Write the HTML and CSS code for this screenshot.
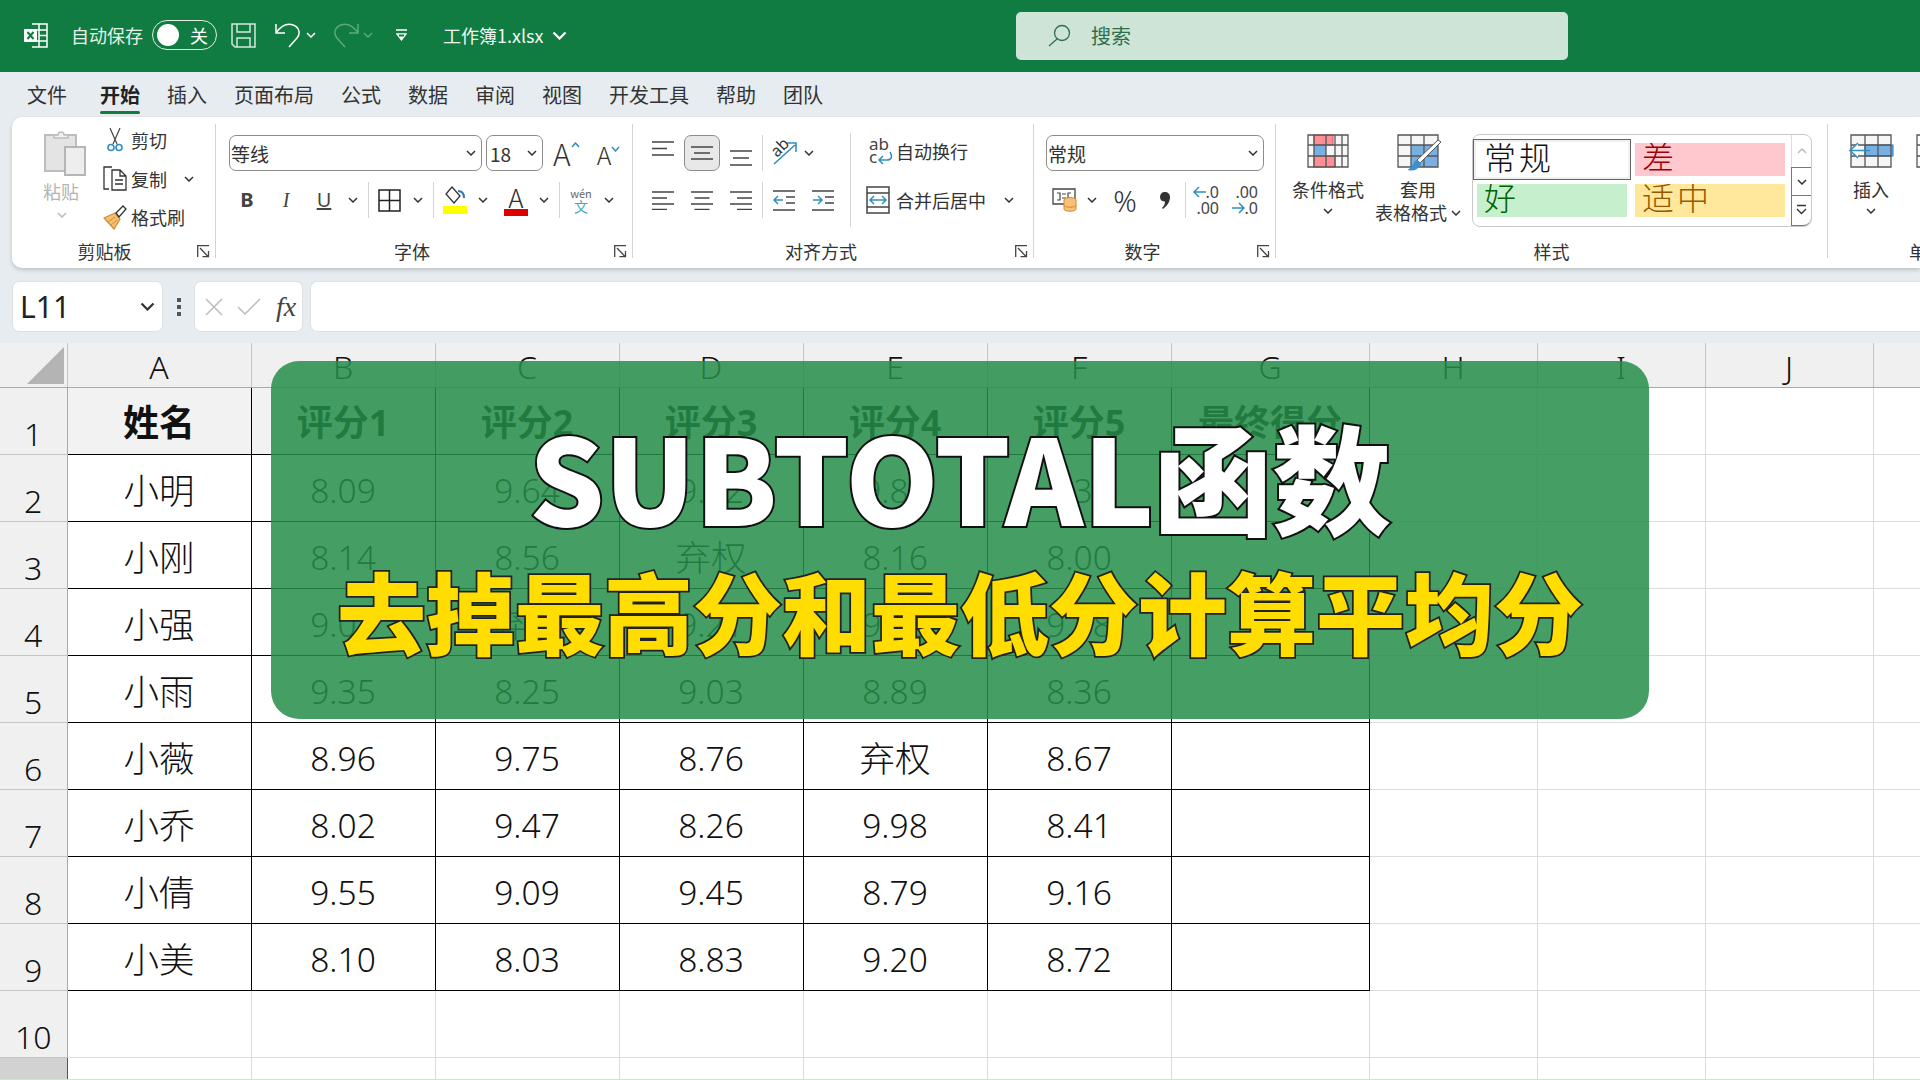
FILE: index.html
```html
<!DOCTYPE html>
<html lang="zh-CN">
<head>
<meta charset="utf-8">
<title>工作簿1.xlsx - Excel</title>
<link rel="stylesheet" href="styles.css">
</head>
<body>
<svg class="defs" width="0" height="0" aria-hidden="true">
  <symbol id="chev" viewBox="0 0 10 6"><path d="M1 1l4 4 4-4" fill="none" stroke="currentColor" stroke-width="1.5"/></symbol>
  <symbol id="launch" viewBox="0 0 13 13"><path d="M.7 12V.7H12M3 3l8 8.5M11.5 6v5.7H5.5" fill="none" stroke="#444" stroke-width="1.3"/></symbol>
  <symbol id="lines" viewBox="0 0 22 19"><path d="M0 1h22M0 7h15M0 13h22M0 18.5h15" fill="none" stroke="#444" stroke-width="1.3"/></symbol>
</svg>

<header class="titlebar">
  <div class="qat">
    <svg class="q-logo" width="24" height="25" viewBox="0 0 24 25"><path d="M8 1h15v23H8M15 1v23M15 7h8M15 12.500h8M15 18h8M8 7h7M8 18h7" fill="none" stroke="#fff" stroke-width="1.500"/><rect x="0" y="6" width="13" height="13" rx="1" fill="#fff"/><path d="M3.500 9l6 7M9.500 9l-6 7" stroke="#107c41" stroke-width="2"/></svg>
    <span class="q-auto">自动保存</span>
    <span class="toggle"><i class="knob"></i><span class="toggle-text">关</span></span>
    <svg class="q-save" width="25" height="25" viewBox="0 0 25 25"><path d="M1 1h23v23H4l-3-3zM6 1v8h13V1M6 24v-9h13v9" fill="none" stroke="#d5e8dc" stroke-width="1.500"/></svg>
    <svg class="q-undo" width="26" height="26" viewBox="0 0 26 26"><path d="M1 2v9h9M1 11C6 4 12 1 18 3c6 2 8 8 4 13l-8 9" fill="none" stroke="#fff" stroke-width="1.500"/></svg>
    <svg class="q-chev" width="10" height="6"><use href="#chev"/></svg>
    <svg class="q-redo" width="26" height="26" viewBox="0 0 26 26"><path d="M25 2v9h-9M25 11C20 4 14 1 8 3c-6 2-8 8-4 13l8 9" fill="none" stroke="#5fa77f" stroke-width="1.500"/></svg>
    <svg class="q-chev q-dim" width="10" height="6"><use href="#chev"/></svg>
    <svg class="q-more" width="11" height="13" viewBox="0 0 11 13"><path d="M0 1h11M1 5l4.500 6L10 5z" fill="#fff" stroke="#fff" stroke-width="1.300"/><path d="M3 6.500h5" stroke="#107c41" stroke-width="2"/></svg>
    <span class="q-name">工作簿1.xlsx</span>
    <svg class="q-namechev" width="15" height="9"><use href="#chev"/></svg>
  </div>
  <div class="search">
    <svg width="23" height="23" viewBox="0 0 23 23"><circle cx="14" cy="9" r="7.500" fill="none" stroke="#2f6f4d" stroke-width="1.300"/><path d="M9 15L1 22" stroke="#2f6f4d" stroke-width="1.300"/></svg>
    <span>搜索</span>
  </div>
</header>

<nav class="tabs">
  <span class="tab-file">文件</span><span class="tab-on">开始</span><span>插入</span><span>页面布局</span><span>公式</span><span>数据</span><span>审阅</span><span>视图</span><span>开发工具</span><span>帮助</span><span>团队</span>
</nav>

<section class="ribbon">
  <div class="group g-clip">
    <div class="clip-body">
      <div class="paste">
        <svg width="42" height="46" viewBox="0 0 42 46"><rect x="1" y="5" width="31" height="36" fill="#e4e4e4" stroke="#bdbdbd" stroke-width="2"/><path d="M10 8V5h4c0-4 6-4 6 0h4v3z" fill="#f0f0f0" stroke="#bdbdbd" stroke-width="1.500"/><rect x="21" y="17" width="20" height="28" fill="#eee" stroke="#b5b5b5" stroke-width="2"/></svg>
        <span class="paste-t">粘贴</span>
        <svg class="paste-c" width="10" height="6"><use href="#chev"/></svg>
      </div>
      <div class="clip-list">
        <div class="clip-row"><span class="clip-ic"><svg width="16" height="24" viewBox="0 0 16 24"><path d="M3 0l7 16M13 0L6 16" fill="none" stroke="#444" stroke-width="1.200"/><circle cx="4" cy="19.500" r="3" fill="none" stroke="#2f8fbf" stroke-width="1.600"/><circle cx="12" cy="19.500" r="3" fill="none" stroke="#2f8fbf" stroke-width="1.600"/></svg></span><span>剪切</span></div>
        <div class="clip-row"><span class="clip-ic"><svg width="24" height="25" viewBox="0 0 24 25"><path d="M9 1H1v22h5M9 4h8l6 6v14H9zM17 4v6h6M12 14h8M12 18h8" fill="none" stroke="#333" stroke-width="1.300"/></svg></span><span>复制</span><svg class="clip-c" width="10" height="6"><use href="#chev"/></svg></div>
        <div class="clip-row"><span class="clip-ic"><svg width="24" height="25" viewBox="0 0 24 25"><path d="M1 13l11-5 5 6-6 10z" fill="#f3c078" stroke="#d98a2b" stroke-width="1.300"/><path d="M5 17l7-5M8 20l6-5" stroke="#d98a2b" stroke-width="1"/><path d="M13 8l7-7 3 3-7 8z" fill="none" stroke="#333" stroke-width="1.300"/></svg></span><span>格式刷</span></div>
      </div>
    </div>
    <div class="g-label clip-label">剪贴板</div>
    <svg class="launcher" width="13" height="13"><use href="#launch"/></svg>
  </div>

  <div class="group g-font">
    <div class="row-a">
      <div class="select s-font"><span>等线</span><svg width="10" height="6"><use href="#chev"/></svg></div>
      <div class="select s-size"><span>18</span><svg width="10" height="6"><use href="#chev"/></svg></div>
      <span class="grow-a">A<svg width="9" height="6" viewBox="0 0 9 6"><path d="M1 5l3.500-4L8 5" fill="none" stroke="#2f8fbf" stroke-width="1.500"/></svg></span>
      <span class="shrink-a">A<svg width="9" height="6" viewBox="0 0 9 6"><path d="M1 1l3.500 4L8 1" fill="none" stroke="#2f8fbf" stroke-width="1.500"/></svg></span>
    </div>
    <div class="row-b font-tracks">
      <b class="f-b">B</b><i class="f-i">I</i><u class="f-u">U</u><svg width="10" height="6"><use href="#chev"/></svg><span class="sep"></span>
      <svg width="23" height="23" viewBox="0 0 23 23"><path d="M1 1h21v21H1zM11.500 1v21M1 11.500h21" fill="none" stroke="#222" stroke-width="1.500"/></svg>
      <svg width="10" height="6"><use href="#chev"/></svg><span class="sep"></span>
      <svg width="24" height="30" viewBox="0 0 24 30"><path d="M9 2l8 9-6 7-8-9z" fill="#fff" stroke="#333" stroke-width="1.300"/><path d="M15 6c4 0 6 2 6 7" fill="none" stroke="#2b7cb8" stroke-width="2"/><rect y="21" width="24" height="8" fill="#ffff00"/></svg>
      <svg width="10" height="6"><use href="#chev"/></svg>
      <span class="f-color">A<i class="f-bar"></i></span>
      <svg width="10" height="6"><use href="#chev"/></svg><span class="sep"></span>
      <span class="f-wen">wén<em>文</em></span>
      <svg width="10" height="6"><use href="#chev"/></svg>
    </div>
    <div class="g-label">字体</div>
    <svg class="launcher" width="13" height="13"><use href="#launch"/></svg>
  </div>

  <div class="group g-align">
    <div class="align-body">
      <div class="align-left">
        <div class="row-a align-tracks">
          <svg width="22" height="26" viewBox="0 0 22 26"><path d="M0 5h22M0 11.500h15M0 18h22" transform="translate(0 -3)" fill="none" stroke="#444" stroke-width="1.300"/></svg>
          <span class="al-on"><svg width="22" height="14" viewBox="0 0 22 14"><path d="M0 1h22M3 7h16M0 13h22" fill="none" stroke="#444" stroke-width="1.300"/></svg></span>
          <svg width="22" height="26" viewBox="0 0 22 26"><path d="M0 9h22M3 16h16M0 23h22" transform="translate(0 2)" fill="none" stroke="#444" stroke-width="1.300"/></svg>
          <span class="sep"></span>
          <span class="orient"><span class="orient-t">ab</span><svg width="26" height="26" viewBox="0 0 26 26"><path d="M3 25L24 6M16 4h9v9" fill="none" stroke="#2f8fbf" stroke-width="1.600"/></svg></span>
          <svg width="10" height="6"><use href="#chev"/></svg>
        </div>
        <div class="row-b align-tracks2">
          <svg width="22" height="19"><use href="#lines"/></svg>
          <svg width="22" height="19" viewBox="0 0 22 19"><path d="M0 1h22M3.500 7h15M0 13h22M3.500 18.500h15" fill="none" stroke="#444" stroke-width="1.300"/></svg>
          <svg width="22" height="19" viewBox="0 0 22 19"><path d="M0 1h22M7 7h15M0 13h22M7 18.500h15" fill="none" stroke="#444" stroke-width="1.300"/></svg>
          <span class="sep"></span>
          <svg width="22" height="21" viewBox="0 0 22 21"><path d="M0 1h22M13 7h9M13 13h9M0 20h22" fill="none" stroke="#444" stroke-width="1.300"/><path d="M10 10H1M5 6l-4 4 4 4" fill="none" stroke="#2f8fbf" stroke-width="1.500"/></svg>
          <svg width="22" height="21" viewBox="0 0 22 21"><path d="M0 1h22M13 7h9M13 13h9M0 20h22" fill="none" stroke="#444" stroke-width="1.300"/><path d="M1 10h9M6 6l4 4-4 4" fill="none" stroke="#2f8fbf" stroke-width="1.500"/></svg>
        </div>
      </div>
      <span class="sep sep-tall"></span>
      <div class="align-right">
        <div class="wrap-row"><span class="wrap-ic"><span class="wrap-t">ab<br>c</span><svg width="16" height="14" viewBox="0 0 16 14"><path d="M13 1c3 5 1 8-3 8H2M6 5L2 9l4 4" fill="none" stroke="#2f8fbf" stroke-width="1.500"/></svg></span><span>自动换行</span></div>
        <div class="wrap-row"><svg class="merge-ic" width="24" height="28" viewBox="0 0 24 28"><path d="M1 1h22v26H1zM1 7h22M1 21h22" fill="none" stroke="#444" stroke-width="1.500"/><path d="M4 14h16M8 10l-4 4 4 4M16 10l4 4-4 4" fill="none" stroke="#2f8fbf" stroke-width="1.500"/></svg><span>合并后居中</span><svg class="merge-c" width="10" height="6"><use href="#chev"/></svg></div>
      </div>
    </div>
    <div class="g-label">对齐方式</div>
    <svg class="launcher" width="13" height="13"><use href="#launch"/></svg>
  </div>

  <div class="group g-num">
    <div class="row-a"><div class="select s-num"><span>常规</span><svg width="10" height="6"><use href="#chev"/></svg></div></div>
    <div class="row-b num-tracks">
      <svg width="25" height="24" viewBox="0 0 25 24"><path d="M1 1h22v15H1z" fill="none" stroke="#444" stroke-width="1.300"/><path d="M5 5h3v7H5M19 5h-3v7h3M10 6h4M10 10h4" fill="none" stroke="#444" stroke-width="1.200"/><ellipse cx="18" cy="12" rx="6" ry="2.500" fill="#f6c27a" stroke="#d98a2b"/><path d="M12 12v9c0 3 12 3 12 0v-9" fill="#f6c27a" stroke="#d98a2b"/><path d="M12 17c0 3 12 3 12 0" fill="none" stroke="#d98a2b"/></svg>
      <svg width="10" height="6"><use href="#chev"/></svg>
      <span class="n-pct">%</span>
      <svg width="10" height="17" viewBox="0 0 10 17"><path d="M4.500 0C8 0 10 2 10 5c0 5-3 9-7 12l-1-1c2-2 3-4 3-6.500C2 9.500 0 8 0 5s2-5 4.500-5z" fill="#333"/></svg>
      <span class="sep"></span>
      <span class="dec"><span class="dec-top"><svg width="13" height="12" viewBox="0 0 13 12"><path d="M13 6H1M6 1L1 6l5 5" fill="none" stroke="#2f8fbf" stroke-width="1.500"/></svg>.0</span><span class="dec-bot">.00</span></span>
      <span class="dec"><span class="dec-bot">.00</span><span class="dec-top"><svg width="13" height="12" viewBox="0 0 13 12"><path d="M0 6h12M7 1l5 5-5 5" fill="none" stroke="#2f8fbf" stroke-width="1.500"/></svg>.0</span></span>
    </div>
    <div class="g-label">数字</div>
    <svg class="launcher" width="13" height="13"><use href="#launch"/></svg>
  </div>

  <div class="group g-style">
    <div class="style-body">
      <div class="big big-cond">
        <svg width="42" height="34" viewBox="0 0 42 34"><rect x="1" y="1" width="40" height="32" fill="#f6f6f6"/><rect x="7" y="1" width="19" height="10" fill="#ff8f96" stroke="#d9534f"/><rect x="7" y="11" width="12" height="10" fill="#79b0e4"/><rect x="7" y="22" width="21" height="11" fill="#ff8f96" stroke="#d9534f"/><path d="M1 1h40v32H1zM7 1v32M19 1v32M28 1v32M35 1v32M1 11h40M1 22h40" fill="none" stroke="#555" stroke-width="1.300"/></svg>
        <span class="big-t">条件格式</span>
        <svg class="big-c" width="10" height="6"><use href="#chev"/></svg>
      </div>
      <div class="big big-table">
        <svg width="46" height="38" viewBox="0 0 46 38"><rect x="1" y="1" width="40" height="32" fill="#f6f6f6"/><rect x="14" y="11" width="27" height="22" fill="#79b0e4"/><path d="M1 1h40v32H1zM14 1v32M27 1v32M1 11h40M1 22h40" fill="none" stroke="#555" stroke-width="1.300"/><path d="M44 8L23 29l-3-3L41 6z" fill="#fff" stroke="#555"/><path d="M20 26c-3 0-3 4-5 6-1 2-4 3-4 4 5 2 12-1 13-7z" fill="#3d8fd1"/></svg>
        <span class="big-t big-t2">套用</span>
        <span class="big-t">表格格式<svg class="big-ci" width="10" height="6"><use href="#chev"/></svg></span>
      </div>
      <div class="gallery">
        <div class="g-cells">
          <span class="sc sc-normal">常规</span><span class="sc sc-bad">差</span><span class="sc sc-good">好</span><span class="sc sc-mid">适中</span>
        </div>
        <div class="g-scroll">
          <span class="gs gs-up"><svg width="10" height="6" viewBox="0 0 10 6"><path d="M1 5l4-4 4 4" fill="none" stroke="#bbb" stroke-width="1.500"/></svg></span>
          <span class="gs gs-dn"><svg width="10" height="6"><use href="#chev"/></svg></span>
          <span class="gs gs-more"><svg width="11" height="13" viewBox="0 0 11 13"><path d="M1 1.500h9M1 5l4.500 4.500L10 5" fill="none" stroke="#333" stroke-width="1.400"/></svg></span>
        </div>
      </div>
    </div>
    <div class="g-label g-label-plain">样式</div>
  </div>

  <div class="group g-cells-group">
    <div class="style-body">
      <div class="big big-ins">
        <svg width="46" height="34" viewBox="0 0 46 34"><rect x="3" y="1" width="40" height="32" fill="#f6f6f6"/><rect x="17" y="11" width="28" height="11" fill="#79b0e4" stroke="#2b7cb8"/><path d="M3 1h40v32H3zM17 1v32M30 1v32M3 11h40M3 22h40" fill="none" stroke="#555" stroke-width="1.300"/><path d="M22 16.500H3M10 9l-8 7.500 8 7.500" fill="#fff" stroke="#2f8fbf" stroke-width="1.600"/></svg>
        <span class="big-t">插入</span>
        <svg class="big-c" width="10" height="6"><use href="#chev"/></svg>
      </div>
      <div class="big big-del">
        <svg width="46" height="34" viewBox="0 0 46 34"><path d="M1 1h40v32H1zM14 1v32M1 11h40M1 22h40" fill="none" stroke="#555" stroke-width="1.300"/></svg>
      </div>
    </div>
    <div class="g-label g-label-cut">单</div>
  </div>
</section>

<section class="formula">
  <div class="namebox"><span>L11</span><svg width="15" height="9"><use href="#chev"/></svg></div>
  <span class="dots"><i></i><i></i><i></i></span>
  <div class="fxbox">
    <svg width="18" height="18" viewBox="0 0 18 18"><path d="M1 1l16 16M17 1L1 17" stroke="#bcbcbc" stroke-width="1.500"/></svg>
    <svg width="24" height="17" viewBox="0 0 24 17"><path d="M1 9l7 7L23 1" fill="none" stroke="#bcbcbc" stroke-width="1.500"/></svg>
    <span class="fx">fx</span>
  </div>
  <div class="fxinput"></div>
</section>

<main class="sheet">
  <table class="grid">
    <colgroup><col class="c-h"><col class="c-a"><col class="c-b"><col class="c-c"><col class="c-d"><col class="c-e"><col class="c-f"><col class="c-g"><col class="c-x"><col class="c-y"><col class="c-z"><col class="c-rest"></colgroup>
    <thead>
      <tr class="r-head"><th class="corner"><i class="tri"></i></th><th>A</th><th>B</th><th>C</th><th>D</th><th>E</th><th>F</th><th>G</th><th>H</th><th>I</th><th>J</th><th></th></tr>
    </thead>
    <tbody>
      <tr><th class="rn">1</th><td class="d hd">姓名</td><td class="d hd">评分1</td><td class="d hd">评分2</td><td class="d hd">评分3</td><td class="d hd">评分4</td><td class="d hd">评分5</td><td class="d hd">最终得分</td><td></td><td></td><td></td><td></td></tr>
      <tr><th class="rn">2</th><td class="d zh">小明</td><td class="d">8.09</td><td class="d">9.64</td><td class="d">9.72</td><td class="d">9.81</td><td class="d">8.33</td><td class="d"></td><td></td><td></td><td></td><td></td></tr>
      <tr><th class="rn">3</th><td class="d zh">小刚</td><td class="d">8.14</td><td class="d">8.56</td><td class="d zh">弃权</td><td class="d">8.16</td><td class="d">8.00</td><td class="d"></td><td></td><td></td><td></td><td></td></tr>
      <tr><th class="rn">4</th><td class="d zh">小强</td><td class="d">9.07</td><td class="d zh">弃权</td><td class="d">9.21</td><td class="d">9.32</td><td class="d">9.58</td><td class="d"></td><td></td><td></td><td></td><td></td></tr>
      <tr><th class="rn">5</th><td class="d zh">小雨</td><td class="d">9.35</td><td class="d">8.25</td><td class="d">9.03</td><td class="d">8.89</td><td class="d">8.36</td><td class="d"></td><td></td><td></td><td></td><td></td></tr>
      <tr><th class="rn">6</th><td class="d zh">小薇</td><td class="d">8.96</td><td class="d">9.75</td><td class="d">8.76</td><td class="d zh">弃权</td><td class="d">8.67</td><td class="d"></td><td></td><td></td><td></td><td></td></tr>
      <tr><th class="rn">7</th><td class="d zh">小乔</td><td class="d">8.02</td><td class="d">9.47</td><td class="d">8.26</td><td class="d">9.98</td><td class="d">8.41</td><td class="d"></td><td></td><td></td><td></td><td></td></tr>
      <tr><th class="rn">8</th><td class="d zh">小倩</td><td class="d">9.55</td><td class="d">9.09</td><td class="d">9.45</td><td class="d">8.79</td><td class="d">9.16</td><td class="d"></td><td></td><td></td><td></td><td></td></tr>
      <tr><th class="rn">9</th><td class="d zh">小美</td><td class="d">8.10</td><td class="d">8.03</td><td class="d">8.83</td><td class="d">9.20</td><td class="d">8.72</td><td class="d"></td><td></td><td></td><td></td><td></td></tr>
      <tr><th class="rn">10</th><td></td><td></td><td></td><td></td><td></td><td></td><td></td><td></td><td></td><td></td><td></td></tr>
      <tr><th class="rn rn-sel"></th><td></td><td></td><td></td><td></td><td></td><td></td><td></td><td></td><td></td><td></td><td></td></tr>
    </tbody>
  </table>
  <div class="banner">
    <div class="b-title">SUBTOTAL函数</div>
    <div class="b-sub">去掉最高分和最低分计算平均分</div>
  </div>
</main>
</body>
</html>
```

FILE: styles.css
```css
* { box-sizing: border-box; }
html, body { margin: 0; padding: 0; }
body {
  width: 1920px; height: 1080px; overflow: hidden;
  background: #e6ecef; color: #333;
  font-family: "Noto Sans CJK SC", "Noto Sans", sans-serif;
  font-size: 18px;
}
svg { display: block; flex: none; }
.defs { position: absolute; }

/* title bar */
.titlebar { height: 72px; background: #107c41; display: flex; align-items: center; color: #fff; padding-bottom: 2px; }
.qat { width: 1016px; display: flex; align-items: center; padding-left: 24px; }
.q-auto { margin-left: 23px; width: 72px; color: #e4f1e9; line-height: 1; }
.toggle { margin-left: 9px; width: 65px; height: 30px; border: 1.5px solid #e0efe6; border-radius: 15px; display: flex; align-items: center; padding-left: 4px; }
.knob { width: 22px; height: 22px; background: #fff; border-radius: 50%; }
.toggle-text { margin-left: 11px; line-height: 1; }
.q-save { margin-left: 14px; }
.q-undo { margin-left: 19px; }
.q-chev { margin-left: 5px; color: #fff; }
.q-dim { color: #5fa77f; margin-left: 4px; }
.q-redo { margin-left: 17px; }
.q-more { margin-left: 23px; }
.q-name { margin-left: 36px; width: 104px; white-space: nowrap; line-height: 1; color: #f2f8f4; }
.q-namechev { margin-left: 5px; color: #fff; }
.search { width: 552px; height: 48px; margin-top: 2px; background: #cde4d7; border-radius: 5px; display: flex; align-items: center; padding-left: 32px; padding-bottom: 2px; color: #2f6f4d; font-size: 20px; }
.search span { margin-left: 20px; }

/* tabs */
.tabs { height: 45px; display: flex; gap: 27px; padding-left: 27px; align-items: center; font-size: 20px; color: #333; }
.tabs span { position: relative; line-height: 28px; }
.tabs .tab-file { margin-right: 6px; }
.tab-on { font-weight: 700; color: #222; }
.tab-on::after { content: ""; position: absolute; left: 0; right: 0; bottom: -5px; height: 3px; background: #107c41; border-radius: 2px; }

/* ribbon */
.ribbon { margin-left: 12px; height: 151px; background: #fff; border-radius: 10px 0 0 10px; box-shadow: 0 2px 4px rgba(0,0,0,.18); display: flex; padding-top: 7px; overflow: hidden; }
.group { position: relative; flex: none; height: 134px; border-right: 1px solid #d4d4d4; display: flex; flex-direction: column; }
.g-label { margin-top: auto; height: 14px; line-height: 14px; text-align: center; padding-right: 24px; color: #333; white-space: nowrap; }
.g-font .g-label, .g-align .g-label { margin-left: -13px; }
.g-num .g-label { margin-left: -12px; }
.g-style .g-label { margin-left: -14px; }
.g-label-plain { padding-right: 0; }
.launcher { position: absolute; right: 5px; bottom: 0; }
.sep { display: block; width: 1px; height: 36px; background: #d4d4d4; }
.row-a { height: 36px; margin-top: 11px; display: flex; align-items: center; }
.row-b { height: 36px; margin-top: 11px; display: grid; align-items: center; justify-items: center; }

/* clipboard */
.g-clip { width: 204px; }
.clip-body { display: flex; padding-left: 31px; height: 112px; }
.paste { width: 58px; padding-top: 6px; display: flex; flex-direction: column; align-items: flex-start; color: #b4b4b4; }
.paste svg:first-child { margin-left: 1px; }
.paste-t { line-height: 20px; margin-top: 5px; }
.paste-c { margin: 11px 0 0 14px; color: #bbb; }
.clip-list { display: flex; flex-direction: column; margin-top: -3px; }
.clip-row { height: 38.5px; flex: none; display: flex; align-items: center; line-height: 1; }
.clip-ic { width: 30px; display: flex; justify-content: center; padding-right: 3px; }
.clip-c { margin-left: 17px; color: #333; }
.clip-label { padding-right: 18px; }

/* selects */
.select { height: 36px; border: 1px solid #8c8c8c; border-radius: 7px; display: flex; align-items: center; justify-content: space-between; padding: 0 5px 0 1px; font-size: 19px; color: #333; }
.g-font { width: 417px; padding-left: 13px; }
.s-font { width: 253px; }
.s-size { width: 57px; margin-left: 4px; padding-left: 3px; }
.grow-a, .shrink-a { display: flex; align-items: flex-start; font-weight: 300; line-height: 1; color: #333; }
.grow-a { margin-left: 10px; font-size: 30px; }
.shrink-a { margin-left: 17px; font-size: 25px; padding-top: 3px; }
.grow-a svg, .shrink-a svg { margin-top: 4px; }
.font-tracks { grid-template-columns: 36px 42px 34px 24px 6px 36px 22px 8px 36px 20px 46px 10px 20px 24px 32px; }
.font-tracks svg { color: #333; }
.f-b { font-size: 20px; line-height: 1; font-family: "Noto Sans", sans-serif; color: #444; }
.f-i { font-size: 20px; line-height: 1; font-family: "Liberation Serif", serif; color: #444; }
.f-u { font-size: 20px; line-height: 1; color: #444; font-family: "Noto Sans", sans-serif; }
.f-color { display: flex; flex-direction: column; align-items: center; width: 24px; font-size: 26px; font-weight: 300; line-height: 24px; color: #333; }
.f-bar { width: 24px; height: 7px; background: #d00; }
.f-wen { display: flex; flex-direction: column; align-items: center; font-size: 11px; line-height: 12px; color: #666; white-space: nowrap; }
.f-wen em { font-style: normal; color: #4a9fc4; font-size: 14px; line-height: 15px; }

/* alignment */
.g-align { width: 401px; padding-left: 13px; }
.align-body { display: flex; height: 103px; }
.align-left { width: 204px; }
.align-tracks { display: grid; grid-template-columns: 34px 44px 34px 8px 36px 14px; align-items: center; justify-items: center; color: #333; }
.align-tracks2 { grid-template-columns: 34px 44px 34px 8px 36px 42px; }
.al-on { width: 36px; height: 36px; background: #e8e8e8; border: 1px solid #8c8c8c; border-radius: 7px; display: flex; align-items: center; justify-content: center; }
.orient { position: relative; width: 26px; height: 28px; display: block; }
.orient-t { position: absolute; left: -1px; top: 0; font-size: 16px; line-height: 1; color: #333; transform: rotate(-45deg); font-family: "Noto Sans", sans-serif; }
.sep-tall { height: 94px; margin-top: 9px; }
.align-right { padding-left: 15px; padding-top: 9px; display: flex; flex-direction: column; gap: 13px; }
.wrap-row { height: 36px; display: flex; align-items: center; line-height: 1; color: #333; }
.wrap-ic { width: 30px; position: relative; height: 30px; }
.wrap-t { position: absolute; left: 3px; top: 1px; font-size: 17px; line-height: 13px; font-family: "Noto Sans", sans-serif; color: #444; }
.wrap-ic svg { position: absolute; left: 11px; top: 15px; }
.merge-ic { margin-right: 6px; }
.merge-c { margin-left: 18px; color: #333; }

/* number */
.g-num { width: 242px; padding-left: 12px; }
.s-num { width: 218px; }
.num-tracks { grid-template-columns: 36px 20px 46px 34px 6px 36px 42px; color: #333; }
.n-pct { font-size: 29px; font-weight: 300; line-height: 1; font-family: "Noto Sans", sans-serif; }
.dec { display: flex; flex-direction: column; align-items: flex-end; font-size: 16px; line-height: 16px; width: 26px; font-family: "Noto Sans", sans-serif; color: #444; }
.dec-top { display: flex; align-items: center; white-space: nowrap; }
.dec-bot { white-space: nowrap; }

/* styles */
.g-style { width: 552px; padding-left: 14px; }
.style-body { display: flex; height: 103px; }
.big { display: flex; flex-direction: column; align-items: center; padding-top: 10px; color: #333; }
.big-t { line-height: 23px; margin-top: 10px; display: flex; align-items: center; white-space: nowrap; }
.big-t2 { margin-top: 6px; }
.big-t2 + .big-t { margin-top: 0; }
.big-c { margin-top: 7px; color: #333; }
.big-ci { margin-left: 5px; color: #333; }
.big-cond { width: 76px; }
.big-table { width: 100px; padding: 10px 0 0 4px; }
.big-table svg:first-child { margin-left: 4px; }
.gallery { margin-left: 6px; margin-top: 10px; width: 340px; height: 93px; border: 1px solid #c9c9c9; border-radius: 8px; display: flex; background: #fff; }
.g-cells { width: 316px; padding-top: 4px; display: grid; grid-template-columns: 158px 158px; grid-template-rows: 41px 41px; font-size: 32px; }
.sc { overflow: hidden; line-height: 25px; height: 33px; margin: 4px; padding-left: 7px; letter-spacing: 3px; font-weight: 300; }
.sc-normal { margin: 0; height: 41px; border: 1px solid #666; outline: 2px solid #f0f0f0; outline-offset: -3px; padding-left: 10px; line-height: 33px; color: #111; }
.sc-bad { background: #ffc7ce; color: #9c0006; }
.sc-good { background: #c6efce; color: #006100; }
.sc-mid { background: #ffe79c; color: #9c5700; }
.g-scroll { margin-left: 2px; flex: 1; display: flex; flex-direction: column; color: #333; }
.gs { display: flex; align-items: center; justify-content: center; border-left: 1px solid #777; }
.gs-up { height: 32px; border-left-color: #ddd; }
.gs-dn { height: 29px; border-top: 1px solid #777; border-bottom: 1px solid #777; }
.gs-more { flex: 1; border-bottom: 1px solid #777; border-bottom-right-radius: 8px; }

/* cells */
.g-cells-group { width: 200px; border-right: 0; padding-left: 20px; }
.big-ins { width: 46px; }
.big-del { width: 46px; margin-left: 22px; }
.g-label-cut { padding-right: 0; text-align: left; padding-left: 61px; }

/* formula bar */
.formula { height: 51px; margin-top: 13px; display: flex; padding-left: 12px; }
.namebox { width: 151px; background: #fff; border: 1px solid #dde1e4; border-radius: 7px; display: flex; align-items: center; justify-content: space-between; padding: 0 7px 0 7px; font-size: 30px; color: #222; font-family: "Noto Sans", sans-serif; }
.namebox svg { color: #333; }
.dots { width: 31px; display: flex; flex-direction: column; align-items: center; justify-content: center; gap: 3px; }
.dots i { width: 4px; height: 4px; background: #555; }
.fxbox { width: 109px; background: #fff; border: 1px solid #dde1e4; border-radius: 7px; display: flex; align-items: center; padding-left: 10px; gap: 14px; }
.fx { font-family: "Liberation Serif", serif; font-style: italic; font-size: 28px; line-height: 1; color: #444; margin-left: 1px; }
.fxinput { flex: 1; margin-left: 7px; background: #fff; border: 1px solid #dde1e4; border-right: 0; border-radius: 7px 0 0 7px; }

/* sheet */
.sheet { position: relative; margin-top: 11px; height: 737px; overflow: hidden; background: #fff; border-bottom: 1px solid #c6e9d1; }
.grid { border-collapse: collapse; table-layout: fixed; width: 1920px; font-family: "Noto Sans", "Noto Sans CJK SC", sans-serif; font-weight: 300; color: #111; }
.c-h { width: 67px; } .c-a { width: 184px; } .c-b { width: 184px; } .c-c { width: 184px; } .c-d { width: 184px; } .c-e { width: 184px; } .c-f { width: 184px; } .c-g { width: 198px; } .c-x { width: 168px; } .c-y { width: 168px; } .c-z { width: 168px; } .c-rest { width: 47px; }
.grid tr { height: 67px; }
.grid tr.r-head { height: 44px; }
.grid th, .grid td { padding: 0; text-align: center; }
.r-head th { background: #f0f0f0; font-weight: 300; font-size: 32px; line-height: 1; padding-top: 5px; border-right: 1px solid #c4c4c4; border-bottom: 1px solid #a8a8a8; }
.corner { position: relative; }
.tri { position: absolute; right: 3px; bottom: 3px; border-style: solid; border-width: 0 0 37px 37px; border-color: transparent transparent #b4b4b4 transparent; }
.rn { background: #f0f0f0; font-weight: 300; font-size: 32px; line-height: 1; vertical-align: bottom; padding-bottom: 4px !important; border-right: 1px solid #a8a8a8; border-bottom: 1px solid #c4c4c4; }
.rn-sel { background: #d2d2d2; border-right: 1px solid #107c41; }
.grid td { border: 1px solid #dcdcdc; font-size: 33.5px; line-height: 1; }
.grid td.d { border: 1px solid #000; padding-top: 7px; }
.grid td.zh { font-size: 35.5px; }
.grid td.hd { background: #f2f2f2; font-weight: 700; font-size: 36px; padding-top: 4px; }

/* overlay banner */
.banner { position: absolute; left: 271px; top: 18px; width: 1378px; height: 358px; border-radius: 28px; background: rgba(36, 142, 74, .85); display: flex; flex-direction: column; align-items: center; font-family: "Noto Sans CJK SC", sans-serif; font-weight: 900; }
.b-title { margin-top: 49px; font-size: 118.5px; line-height: 130px; color: #fff; white-space: nowrap; -webkit-text-stroke: 4px #111; paint-order: stroke fill; }
.b-sub { margin-top: 20px; font-size: 89px; line-height: 100px; color: #ffdd00; white-space: nowrap; -webkit-text-stroke: 3.5px #222; paint-order: stroke fill; }
```
